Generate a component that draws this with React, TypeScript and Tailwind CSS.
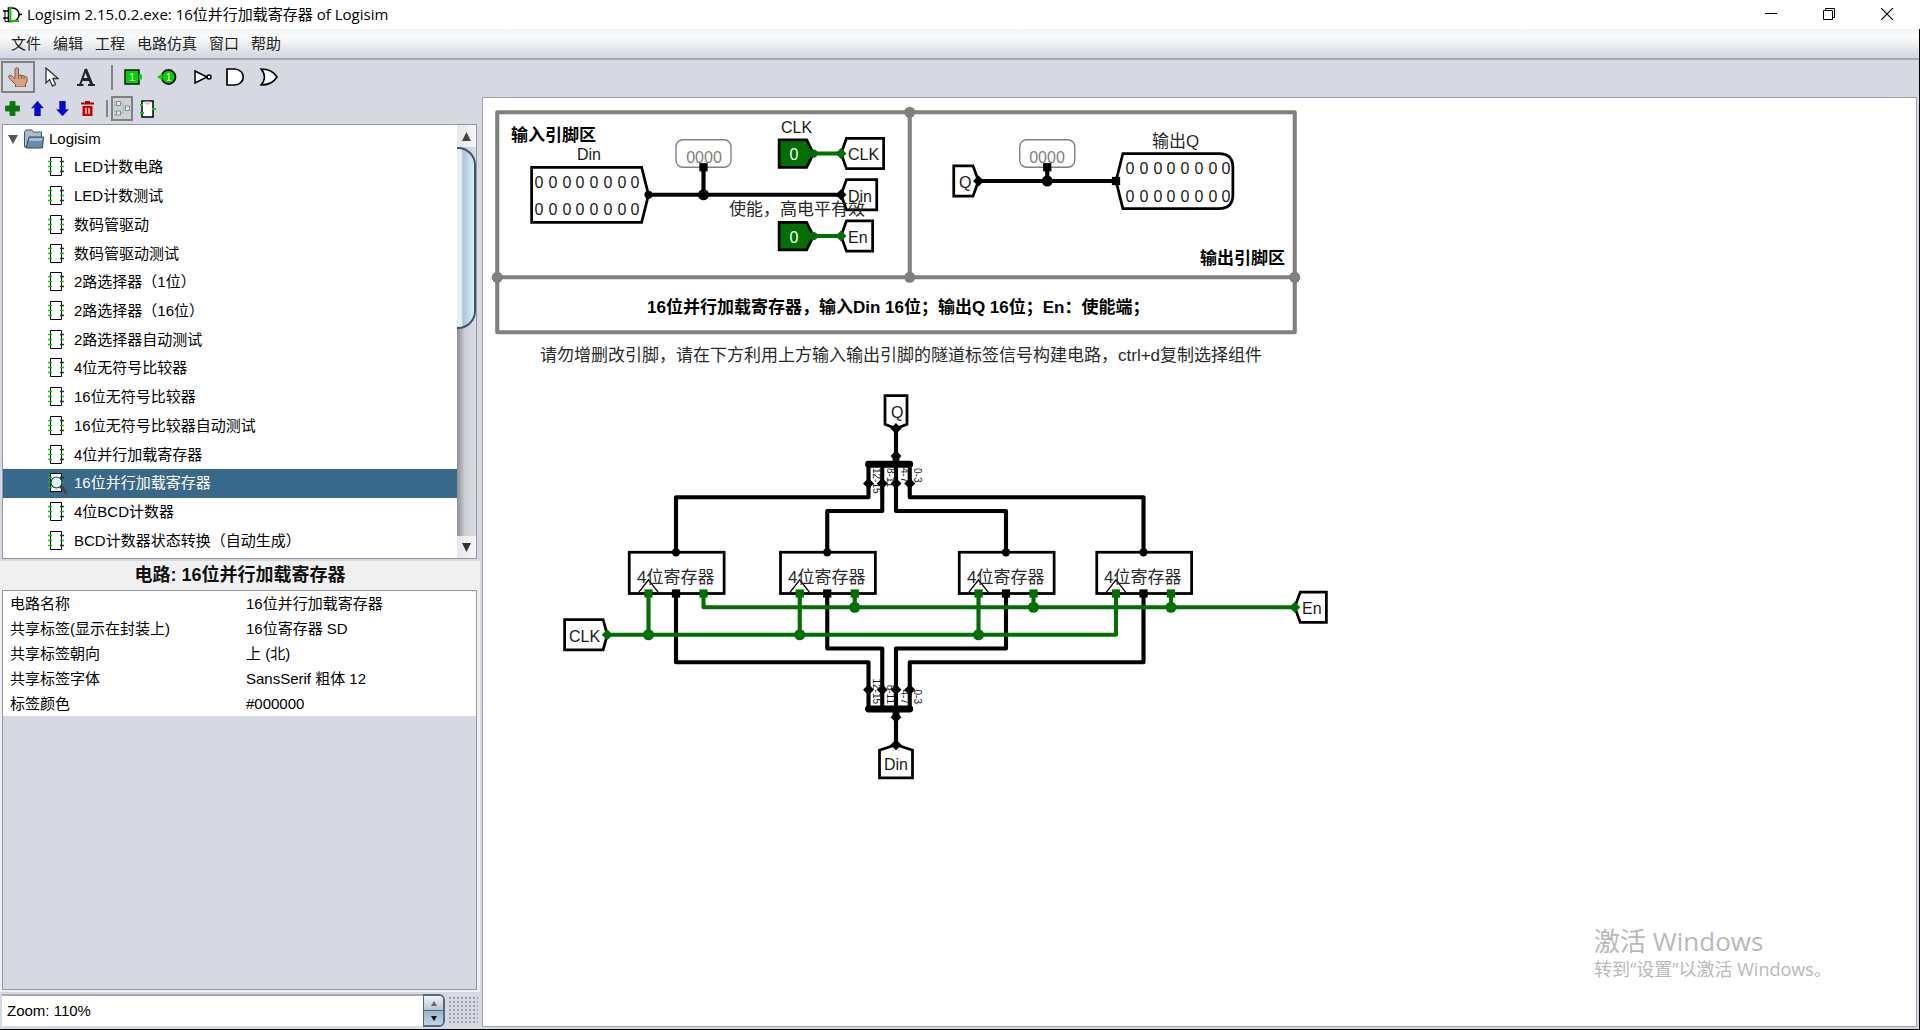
import type { ReactNode } from "react";

const menus = ["文件", "编辑", "工程", "电路仿真", "窗口", "帮助"];

const circuits = [
  "LED计数电路",
  "LED计数测试",
  "数码管驱动",
  "数码管驱动测试",
  "2路选择器（1位）",
  "2路选择器（16位）",
  "2路选择器自动测试",
  "4位无符号比较器",
  "16位无符号比较器",
  "16位无符号比较器自动测试",
  "4位并行加载寄存器",
  "16位并行加载寄存器",
  "4位BCD计数器",
  "BCD计数器状态转换（自动生成）",
];

const current = "16位并行加载寄存器";

const attributes = [
  ["电路名称", "16位并行加载寄存器"],
  ["共享标签(显示在封装上)", "16位寄存器 SD"],
  ["共享标签朝向", "上 (北)"],
  ["共享标签字体", "SansSerif 粗体 12"],
  ["标签颜色", "#000000"],
];

const GREEN = "#007000";

function TitleBar() {
  return (
    <header className="flex h-[29px] items-center bg-white">
      <svg className="ml-[3px] mr-[5px] shrink-0" width="19" height="18" viewBox="0 0 19 18">
        <path d="M5.500 2H9.500C13.500 2 16 5 16 8.500C16 12 13.500 15.500 9.500 15.500H5.500Z" fill="#fff" stroke="#000" strokeWidth="1.600" />
        <path d="M0 5H5M0 12H5M16 8.500H19" stroke="#000" strokeWidth="1.600" />
        <path d="M7.500 0.500V15H16" fill="none" stroke="#00c800" strokeWidth="1.800" />
        <path d="M2 4V15.500H5" fill="none" stroke="#000" strokeWidth="1" />
      </svg>
      <h1 className="flex-1 whitespace-nowrap pb-[2px] font-['Open_Sans','Noto_Sans_CJK_SC',sans-serif] text-[15px] leading-5 text-black">
        Logisim 2.15.0.2.exe: 16位并行加载寄存器 of Logisim
      </h1>
      <div className="mr-1 flex pb-[2px]">
        <button aria-label="最小化" className="flex h-[27px] w-[58px] items-center justify-center">
          <svg width="12" height="12" viewBox="0 0 12 12">
            <path d="M0 5.500H12" stroke="#000" />
          </svg>
        </button>
        <button aria-label="还原" className="flex h-[27px] w-[58px] items-center justify-center">
          <svg width="12" height="12" viewBox="0 0 12 12" fill="none" stroke="#000">
            <path d="M0.500 2.500H9.500V11.500H0.500Z M2.500 2.500V0.500H11.500V9.500H9.500" />
          </svg>
        </button>
        <button aria-label="关闭" className="flex h-[27px] w-[58px] items-center justify-center">
          <svg width="12" height="12" viewBox="0 0 12 12">
            <path d="M0 0L12 12M12 0L0 12" stroke="#000" strokeWidth="1.200" />
          </svg>
        </button>
      </div>
    </header>
  );
}

function MenuBar() {
  return (
    <nav className="flex h-[31px] items-center gap-3 border-b-2 border-[#a4a6b4] bg-linear-to-b from-[#f4f5f7] via-[#fafbfb] via-30% to-[#d6d9e1] to-90% pl-[11px]">
      {menus.map((m) => (
        <button key={m} className="text-[15px] leading-5 text-[#222]">
          {m}
        </button>
      ))}
    </nav>
  );
}

function Tool({ label, active, children }: { label: string; active?: boolean; children: ReactNode }) {
  return (
    <button
      aria-label={label}
      className={`flex h-8 w-[34px] items-center justify-center ${active ? "border-2 border-[#808080]" : ""}`}
    >
      {children}
    </button>
  );
}

function ToolBar() {
  return (
    <div className="flex h-[33px] items-end pl-px">
      <Tool label="戳" active>
        <svg width="20" height="20" viewBox="0 0 20 20" className="shrink-0">
          <path
            d="M7 2C7 0.500 10.500 0.500 10.500 2V8L14 8.500L18 9.500C19 10 19 11 19 12V15L17.500 17V20H7.500V17.500L1.500 11.500L0.500 9L3.500 8.500L7 12Z"
            fill="#d9a088"
            stroke="#7c5a4c"
            strokeWidth="1"
          />
          <path d="M10.500 8V12M13.500 9V12M16 10V12" stroke="#7c5a4c" />
        </svg>
      </Tool>
      <Tool label="选择">
        <svg width="14" height="20" viewBox="0 0 14 20">
          <path d="M1 1V16L4.500 12.500L7.500 19L10.500 17.500L8 11.500H13Z" fill="#fff" stroke="#333" strokeWidth="1.300" />
        </svg>
      </Tool>
      <Tool label="文本">
        <svg width="18" height="18" viewBox="0 0 18 18">
          <path d="M3 17L8.500 2" fill="none" stroke="#222" strokeWidth="2" />
          <path d="M8.500 1L15 17M5.500 11.500H12.500" fill="none" stroke="#222" strokeWidth="3" />
          <path d="M0 17H6.500M11 17H18" stroke="#222" strokeWidth="2" />
        </svg>
      </Tool>
      <div className="mr-[3px] flex h-8 w-[10px] items-center justify-end">
        <div className="h-[25px] w-[2px] bg-[#848488]" />
      </div>
      <Tool label="输入引脚">
        <svg width="18" height="16" viewBox="0 0 18 16">
          <path d="M1 1H15V15H1Z" fill="#00d000" stroke="#111" strokeWidth="1.500" />
          <path d="M15 5.500H18V10.500H15Z" fill="#00d000" />
          <text x="8" y="12" textAnchor="middle" fontSize="10" fill="#fff">1</text>
        </svg>
      </Tool>
      <Tool label="输出引脚">
        <svg width="20" height="16" viewBox="0 0 20 16">
          <circle cx="11.500" cy="8" r="7" fill="#00d000" stroke="#111" strokeWidth="1.800" />
          <path d="M0 8L5.500 4.500V11.500Z" fill="#00d000" />
          <text x="11.500" y="12" textAnchor="middle" fontSize="10" fill="#fff">1</text>
        </svg>
      </Tool>
      <Tool label="非门">
        <svg width="22" height="16" viewBox="0 0 22 16" fill="#fff" stroke="#000" strokeWidth="1.500">
          <path d="M5 2L17 8L5 14Z" />
          <circle cx="19" cy="8" r="2" />
        </svg>
      </Tool>
      <Tool label="与门">
        <svg width="18" height="18" viewBox="0 0 18 18">
          <path d="M1 1H9C20 2 20 16 9 17H1Z" fill="#fff" stroke="#000" strokeWidth="1.700" />
        </svg>
      </Tool>
      <Tool label="或门">
        <svg width="18" height="18" viewBox="0 0 18 18">
          <path d="M1 1C8 1 14 4 17 9C14 14 8 17 1 17C5.500 12 5.500 6 1 1Z" fill="#fff" stroke="#000" strokeWidth="1.700" />
        </svg>
      </Tool>
    </div>
  );
}

function ExplorerBar() {
  return (
    <div className="flex h-[31px] items-center">
      <button aria-label="添加电路" className="flex w-[25px] justify-center">
        <svg width="15" height="15" viewBox="0 0 15 15">
          <path d="M5 0.500H10V5H14.500V10H10V14.500H5V10H0.500V5H5Z" fill="#007c00" stroke="#2c6e2c" />
        </svg>
      </button>
      <button aria-label="上移" className="flex w-[25px] justify-center">
        <svg width="13" height="15" viewBox="0 0 13 15">
          <path d="M6.500 0L12.500 7H9.500V15H3.500V7H0.500Z" fill="#0000e0" stroke="#3030a0" strokeWidth="0.500" />
        </svg>
      </button>
      <button aria-label="下移" className="flex w-[25px] justify-center">
        <svg width="13" height="15" viewBox="0 0 13 15">
          <path d="M6.500 15L12.500 8.500H9.500V0H3.500V8.500H0.500Z" fill="#0000e0" stroke="#3030a0" strokeWidth="0.500" />
        </svg>
      </button>
      <button aria-label="删除电路" className="flex w-[25px] justify-center">
        <svg width="13" height="15" viewBox="0 0 13 15">
          <path d="M0 1.500H4V0H9V1.500H13V3.500H0Z" fill="#b00000" />
          <path d="M1.500 5H11.500V15H1.500Z" fill="#cc0000" />
          <path d="M5 7V13M8 7V13" stroke="#fff" strokeWidth="1.200" />
        </svg>
      </button>
      <div className="mr-[3px] flex w-2 justify-end">
        <div className="h-[17px] w-[2px] bg-[#848488]" />
      </div>
      <button aria-label="编辑电路布局" className="flex h-[25px] w-[22px] items-center justify-center border-2 border-[#808080] bg-[#cdd0d8]">
        <svg width="17" height="17" viewBox="0 0 17 17" className="shrink-0">
          <path d="M0 2H3M0 5H3M0 11H3M0 15H3M7 3.500H9V7.500H11M7 13H9V9.500H11" fill="none" stroke="#9cc8a4" strokeWidth="1.500" />
          <path d="M2.500 1.500H6.500V5.500H2.500ZM2.500 11H6.500V15H2.500ZM11.500 6H15.500V10.500H11.500Z" fill="#e4e6ec" stroke="#888" />
        </svg>
      </button>
      <button aria-label="编辑电路外观" className="ml-[2px] flex w-[25px] justify-center">
        <svg width="16" height="18" viewBox="0 0 16 18">
          <path d="M2 1H13V17H2Z" fill="#fff" stroke="#000" strokeWidth="1.500" />
          <path d="M5 1.500C5 5 10 5 10 1.500" fill="#ddd" stroke="#aaa" />
          <path d="M0 5H3M12 9H16M0 13H4" stroke="#00cc00" strokeWidth="2" />
        </svg>
      </button>
    </div>
  );
}

function ChipIcon({ open }: { open: boolean }) {
  return (
    <svg width="20" height="22" viewBox="0 0 20 22" className="shrink-0">
      <path d="M2.500 1.500H13.500V19.500H2.500Z" fill="#fff" stroke="#000" />
      <path d="M0 5.500H4M0 10.500H4M0 15.500H4M12 10.500H16" stroke="#00d000" strokeWidth="1.500" />
      <path d="M12 5.500H16M12 15.500H16" stroke="#004c00" strokeWidth="1.500" />
      {open && (
        <>
          <path d="M13 15L18.500 21" stroke="#444" strokeWidth="3" />
          <circle cx="8.500" cy="10.500" r="5.500" fill="#d4fbff" stroke="#333" strokeWidth="1.200" />
        </>
      )}
    </svg>
  );
}

function CircuitTree() {
  return (
    <div className="mx-[2px] flex h-[435px] w-[475px] border border-[#9496a6] bg-white">
      <div className="min-w-0 flex-1 text-[15px] leading-5 text-black">
        <button className="flex h-7 w-full items-center pl-[5px]">
          <svg width="10" height="9" viewBox="0 0 10 9">
            <path d="M0 0H10L5 9Z" fill="#555" />
          </svg>
          <svg width="20" height="20" viewBox="0 0 20 20" className="ml-[6px] mr-[5px]">
            <path d="M0.500 18V3L2 1H8L9.500 3H17.500V18Z" fill="#a9bccd" stroke="#44586c" />
            <path d="M2 19L5 8H19.500L18.500 19Z" fill="#6d8ba6" stroke="#33485c" />
            <path d="M5.500 9H18.500L18 12H5Z" fill="#a8bccf" />
          </svg>
          Logisim
        </button>
        <ul className="flex h-[402px] flex-col">
          {circuits.map((name) => (
            <li key={name} className="flex-1">
              <button
                className={`flex h-full w-full items-center gap-[6px] whitespace-nowrap pl-[45px] ${
                  name === current ? "bg-[#39698a] text-white" : ""
                }`}
              >
                <ChipIcon open={name === current} />
                {name}
              </button>
            </li>
          ))}
        </ul>
      </div>
      <div className="flex w-[19px] flex-col bg-linear-to-r from-[#8c8e94] via-[#cbcdd2] via-40% to-[#dcdde1]">
        <button aria-label="向上滚动" className="flex h-[22px] items-center justify-center bg-linear-to-r from-[#e6e7ea] to-[#f6f6f8]">
          <svg width="9" height="9" viewBox="0 0 9 9">
            <path d="M4.500 0L9 9H0Z" fill="#444" />
          </svg>
        </button>
        <div className="h-[182px] rounded-r-[18px] border-2 border-l-0 border-[#3c566c] bg-linear-to-r from-[#e8eff6] from-25% via-[#aac4da] via-35% to-[#dcecf8]" />
        <div className="flex-1" />
        <button aria-label="向下滚动" className="flex h-[22px] items-center justify-center bg-linear-to-r from-[#e6e7ea] to-[#f6f6f8]">
          <svg width="9" height="9" viewBox="0 0 9 9">
            <path d="M4.500 9L9 0H0Z" fill="#333" />
          </svg>
        </button>
      </div>
    </div>
  );
}

function AttributePanel() {
  return (
    <section className="mt-[2px] mr-[2px] flex min-h-0 flex-1 flex-col bg-[#f0f0f0] pb-[2px]">
      <h2 className="h-[29px] text-center text-[18px] font-bold leading-7 text-[#111]">电路: 16位并行加载寄存器</h2>
      <div className="mx-[2px] w-[475px] flex-1 border border-[#9496a6] bg-[#d6d9e1]">
        <table className="w-full bg-white text-left text-[15px] leading-5 text-black">
          <tbody>
            {attributes.map(([key, value]) => (
              <tr key={key} className="h-[25px]">
                <th className="w-[243px] p-0 pl-[7px] font-normal">{key}</th>
                <td className="p-0">{value}</td>
              </tr>
            ))}
          </tbody>
        </table>
      </div>
    </section>
  );
}

function ZoomBar() {
  return (
    <div className="flex h-[37px] items-start pt-[2px] pl-[2px]">
      <input
        aria-label="缩放"
        defaultValue="Zoom: 110%"
        className="h-8 w-[421px] border-t-2 border-[#a8a8ac] bg-white px-[5px] pb-px text-[15px] leading-5 text-black outline-none"
      />
      <div className="flex h-[33px] w-[22px] flex-col overflow-hidden rounded-r-md border-2 border-l border-[#51697f]">
        <button aria-label="放大" className="flex flex-1 items-center justify-center border-b border-[#51697f] bg-linear-to-b from-[#f0f3f7] to-[#b9c5d2]">
          <svg width="6" height="5" viewBox="0 0 6 5">
            <path d="M3 0L6 5H0Z" fill="#666" />
          </svg>
        </button>
        <button aria-label="缩小" className="flex flex-1 items-center justify-center bg-linear-to-b from-[#9db5cc] to-[#bdd3e6]">
          <svg width="6" height="5" viewBox="0 0 6 5">
            <path d="M3 5L6 0H0Z" fill="#000" />
          </svg>
        </button>
      </div>
      <div className="mt-[2px] ml-[3px] h-[28px] w-[30px] bg-[radial-gradient(#a0a2aa_1px,transparent_1px)] bg-size-[4px_4px]" />
    </div>
  );
}

// Circuit geometry is in grid units, drawn inside a scaled group.

function Wire({ d, color = "#000" }: { d: string; color?: string }) {
  return <path d={d} fill="none" stroke={color} strokeWidth="3" strokeLinejoin="round" strokeLinecap="round" />;
}

function Port({ x, y, color = "#000" }: { x: number; y: number; color?: string }) {
  return <rect x={x - 3} y={y - 3} width="6" height="6" fill={color} />;
}

function Dot({ x, y, r = 3, color = "#000" }: { x: number; y: number; r?: number; color?: string }) {
  return <circle cx={x} cy={y} r={r} fill={color} />;
}

function Diamond({ x, y, color = "#000" }: { x: number; y: number; color?: string }) {
  return <path d={`M${x - 4} ${y}L${x} ${y - 4}L${x + 4} ${y}L${x} ${y + 4}Z`} fill={color} />;
}

function Register({ x }: { x: number }) {
  return (
    <g>
      <rect x={x - 34} y="330" width="69" height="30" fill="none" stroke="#000" strokeWidth="2" />
      <path d={`M${x - 27} 359L${x - 20} 350L${x - 13} 359`} fill="none" stroke="#000" />
      <Dot x={x} y={330} />
      <Port x={x - 20} y={360} color={GREEN} />
      <Port x={x} y={360} />
      <Port x={x + 20} y={360} color={GREEN} />
    </g>
  );
}

const registers = [140, 250, 380, 480];
const columns = [0, 1, 2, 3, 4, 5, 6, 7];
const ranges = [
  { text: "12-15", x: 390 },
  { text: "8-11", x: 404 },
  { text: "4-7", x: 418 },
  { text: "0-3", x: 431 },
];

function Shapes() {
  return (
    <g transform="translate(0.500 0.500) scale(1.375)">
      <Wire color="#808080" d="M10 10H590V170H10ZM10 130H590M310 10V130" />
      {[[310, 10], [10, 130], [310, 130], [590, 130]].map(([x, y]) => (
        <Dot key={`${x}-${y}`} x={x} y={y} r={4} color="#808080" />
      ))}

      {/* input pins */}
      <g fill="none" stroke="#000" strokeWidth="2">
        <path d="M35 50H115L120 70L115 90H35Z" />
        <path d="M260 40L264 29H291V51H264Z" />
        <path d="M260 70L264 59H286V81H264Z" />
        <path d="M260 100L264 89H283V111H264Z" />
        <path d="M215 30H235L240 40L235 50H215Z" fill={GREEN} />
        <path d="M215 90H235L240 100L235 110H215Z" fill={GREEN} />
        <rect x="140" y="30" width="40" height="20" rx="5" stroke="#808080" strokeWidth="1" />
        <rect x="390" y="30" width="40" height="20" rx="5" stroke="#808080" strokeWidth="1" />
      </g>
      <Wire d="M120 70H260M160 50V70" />
      <Wire d="M240 40H260M240 100H260" color={GREEN} />
      <Dot x={120} y={70} />
      <Diamond x={260} y={70} />
      <Dot x={160} y={70} r={4} />
      <Port x={160} y={50} />
      <Dot x={240} y={40} color={GREEN} />
      <Diamond x={260} y={40} color={GREEN} />
      <Dot x={240} y={100} color={GREEN} />
      <Diamond x={260} y={100} color={GREEN} />

      {/* output pin */}
      <g fill="none" stroke="#000" strokeWidth="2">
        <path d="M342 49H356L360 60L356 71H342Z" />
        <path d="M465 40H535Q545 40 545 50V70Q545 80 535 80H465L460 60Z" />
      </g>
      <Wire d="M360 60H460M410 50V60" />
      <Diamond x={360} y={60} />
      <Dot x={410} y={60} r={4} />
      <Port x={410} y={50} />
      <Port x={460} y={60} />

      {/* tunnels of the main circuit */}
      <g fill="none" stroke="#000" strokeWidth="2">
        <path d="M292 216H308V237L300 240L292 237Z" />
        <path d="M288 494H312V474L300 470L288 474Z" />
        <path d="M590 370L594 359H613V381H594Z" />
        <path d="M90 390L87 379H59V401H87Z" />
      </g>

      {/* buses */}
      <Wire d="M300 240V260M280 266V290H140V330M290 266V300H250V330M300 266V300H380V330M310 266V290H480V330" />
      <Wire d="M140 360V410H280V444M250 360V400H290V444M380 360V400H300V444M480 360V410H310V444M300 450V470" />
      <path d="M280 266H310M280 444H310M300 260V266M300 444V450" stroke="#000" strokeWidth="5" strokeLinecap="round" />
      <Diamond x={300} y={240} />
      <Diamond x={300} y={260} />
      <Diamond x={300} y={450} />
      <Diamond x={300} y={470} />
      {[280, 290, 300, 310].map((x) => (
        <g key={x}>
          <Diamond x={x} y={280} />
          <Diamond x={x} y={430} />
        </g>
      ))}

      {/* enable and clock lines */}
      <Wire d="M160 360V370H590M270 360V370M400 360V370M500 360V370" color={GREEN} />
      <Wire d="M90 390H460V360M120 360V390M230 360V390M360 360V390" color={GREEN} />
      {[270, 400, 500].map((x) => (
        <Dot key={x} x={x} y={370} r={4} color={GREEN} />
      ))}
      {[120, 230, 360].map((x) => (
        <Dot key={x} x={x} y={390} r={4} color={GREEN} />
      ))}
      <Diamond x={590} y={370} color={GREEN} />
      <Diamond x={90} y={390} color={GREEN} />

      {registers.map((x) => (
        <Register key={x} x={x} />
      ))}
    </g>
  );
}

function Labels() {
  return (
    <g fill="#1a1a1a" fontSize="16">
      <g fontSize="17" fontWeight="bold" fill="#000">
        <text x="28" y="43">输入引脚区</text>
        <text x="717" y="166">输出引脚区</text>
        <text x="164" y="215">16位并行加载寄存器，输入Din 16位；输出Q 16位；En：使能端；</text>
      </g>
      <g fontSize="17" fill="#2a2a2a">
        <text x="246" y="117">使能，高电平有效</text>
        <text x="669" y="49">输出Q</text>
        <text x="57" y="263">请勿增删改引脚，请在下方利用上方输入输出引脚的隧道标签信号构建电路，ctrl+d复制选择组件</text>
        {registers.map((x) => (
          <text key={x} x={Math.round(x * 1.375) - 39} y="485">4位寄存器</text>
        ))}
      </g>

      <text x="94" y="62">Din</text>
      <text x="298" y="35">CLK</text>
      <text x="365" y="62">CLK</text>
      <text x="365" y="104">Din</text>
      <text x="365" y="145">En</text>
      <text x="476" y="90">Q</text>
      <text x="408" y="320">Q</text>
      <text x="401" y="672">Din</text>
      <text x="819" y="516">En</text>
      <text x="86" y="544">CLK</text>

      <g textAnchor="middle">
        {columns.map((i) => (
          <g key={i}>
            <text x={Math.round(56 + i * 13.75)} y="90">0</text>
            <text x={Math.round(56 + i * 13.75)} y="117">0</text>
            <text x={Math.round(647 + i * 13.75)} y="76">0</text>
            <text x={Math.round(647 + i * 13.75)} y="104">0</text>
          </g>
        ))}
        <g fill="#808080">
          <text x="221" y="65">0000</text>
          <text x="564" y="65">0000</text>
        </g>
        <g fill="#fff">
          <text x="311" y="62">0</text>
          <text x="311" y="145">0</text>
        </g>
      </g>

      {/* bit ranges along the splitter arms */}
      <g fontSize="10">
        {ranges.map((r) => (
          <g key={r.text}>
            <text transform={`translate(${r.x} 370) rotate(90)`}>{r.text}</text>
            <text transform={`translate(${r.x} 606) rotate(90)`} textAnchor="end">{r.text}</text>
          </g>
        ))}
      </g>
    </g>
  );
}

export default function App() {
  return (
    <div className="flex h-screen flex-col overflow-hidden border-b border-black bg-[#d6d9e1] font-['Liberation_Sans','Noto_Sans_CJK_SC',sans-serif]">
      <TitleBar />
      <div className="flex min-h-0 flex-1 flex-col border-r border-black">
        <MenuBar />
        <ToolBar />
        <main className="flex min-h-0 flex-1">
          <aside className="flex w-[482px] shrink-0 flex-col">
            <ExplorerBar />
            <CircuitTree />
            <AttributePanel />
            <ZoomBar />
          </aside>
          <section className="relative mt-1 mr-[2px] mb-[2px] min-w-0 flex-1 overflow-hidden border border-[#9fa1b0] bg-white">
            <svg className="block h-full w-full">
              <Shapes />
              <Labels />
            </svg>
            <div className="absolute right-[70px] bottom-[45px] w-[252px] whitespace-nowrap font-['Open_Sans','Noto_Sans_CJK_SC',sans-serif] text-[#b9b9b9]">
              <p className="text-[26px] leading-8">激活 Windows</p>
              <p className="text-[18px] leading-6">转到“设置”以激活 Windows。</p>
            </div>
          </section>
        </main>
      </div>
    </div>
  );
}
